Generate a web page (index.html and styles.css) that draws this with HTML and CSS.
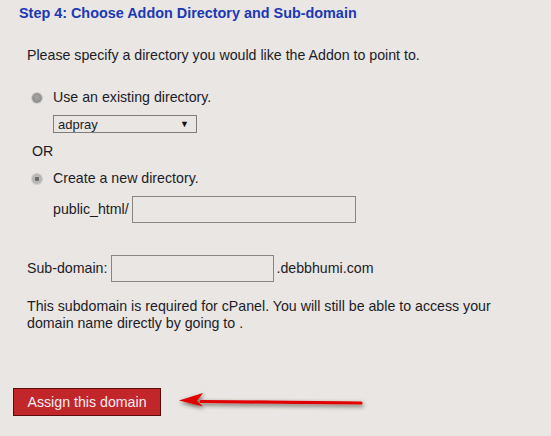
FILE: index.html
```html
<!DOCTYPE html>
<html>
<head>
<meta charset="utf-8">
<link rel="stylesheet" href="styles.css">
</head>
<body>
<div class="page">
  <h2 class="title">Step 4: Choose Addon Directory and Sub-domain</h2>
  <p class="intro">Please specify a directory you would like the Addon to point to.</p>
  <div class="radio-row first">
    <span class="radio"></span>
    <span>Use an existing directory.</span>
  </div>
  <div class="select">
    <span>adpray</span>
    <span class="caret">▼</span>
  </div>
  <div class="or">OR</div>
  <div class="radio-row second">
    <span class="radio checked"></span>
    <span>Create a new directory.</span>
  </div>
  <div class="field-row dir">
    <span>public_html/</span>
    <span class="input wide"></span>
  </div>
  <div class="field-row sub">
    <span>Sub-domain:</span>
    <span class="input narrow"></span>
    <span>.debbhumi.com</span>
  </div>
  <p class="help">This subdomain is required for cPanel. You will still be able to access your domain name directly by going to .</p>
  <div class="actions">
    <button class="assign">Assign this domain</button>
    <svg class="arrow" width="200" height="30" viewBox="0 0 200 30">
      <defs>
        <filter id="sh" x="-10%" y="-60%" width="120%" height="220%">
          <feDropShadow dx="1" dy="2" stdDeviation="2" flood-color="#3a3025" flood-opacity="0.75"/>
        </filter>
      </defs>
      <g filter="url(#sh)">
        <path d="M28 14.5 L188 16" stroke="#e00000" stroke-width="3.2" stroke-linecap="round" fill="none"/>
        <path d="M6 13.5 L30 6 L24 14 L30 19.5 Z" fill="#e00000"/>
      </g>
    </svg>
  </div>
</div>
</body>
</html>
```
FILE: styles.css
```css
html, body {
  margin: 0;
  padding: 0;
  background: #e9e6e3;
}
.page {
  width: 551px;
  height: 436px;
  font-family: "Liberation Sans", Arial, sans-serif;
  font-size: 14.2px;
  line-height: 15px;
  color: #1c1c28;
  display: flex;
  flex-direction: column;
  align-items: flex-start;
}
.title {
  margin: 6px 0 0 19px;
  font-size: 14.4px;
  font-weight: bold;
  line-height: 15px;
  color: #1b38b5;
}
.intro {
  margin: 27px 0 0 27px;
}
.radio-row {
  display: flex;
  align-items: center;
  gap: 11px;
  margin-left: 32px;
}
.radio-row.first { margin-top: 27px; }
.radio-row.second { margin-top: 12px; }
.radio {
  width: 10px;
  height: 10px;
  border-radius: 50%;
  background: radial-gradient(circle at 50% 40%, #a8a6a4 0%, #8f8d8b 70%, #c4c2c0 100%);
  box-shadow: 0 0 0 1px #cfcdcb;
}
.radio.checked {
  background: radial-gradient(circle, #6d6b69 0 2px, #bdbbb9 2.5px, #a9a7a5 100%);
}
.select {
  margin: 10px 0 0 53px;
  box-sizing: border-box;
  width: 144px;
  height: 18px;
  border: 1px solid #807c79;
  display: flex;
  align-items: center;
  justify-content: space-between;
  padding: 0 7px 0 4px;
  font-size: 13px;
}
.caret {
  font-size: 9px;
  color: #111;
}
.or {
  margin: 11px 0 0 32px;
}
.field-row {
  display: flex;
  align-items: center;
}
.field-row.dir {
  margin: 10px 0 0 53px;
  gap: 3px;
}
.field-row.sub {
  margin: 32px 0 0 27px;
  gap: 4px;
}
.input {
  box-sizing: border-box;
  height: 27px;
  border: 1px solid #8a8582;
}
.input.wide { width: 224px; }
.input.narrow { width: 163px; margin-right: -2px; }
.help {
  margin: 16px 0 0 27px;
  width: 500px;
  line-height: 17px;
}
.actions {
  margin: 54px 0 0 13px;
  display: flex;
  align-items: center;
}
.assign {
  box-sizing: border-box;
  width: 148px;
  height: 28px;
  background: #c1262b;
  border: 1px solid #5c0c0e;
  color: #f4eef2;
  font-family: "Liberation Sans", Arial, sans-serif;
  font-size: 14.2px;
  padding: 0;
  margin: 0;
}
.arrow {
  margin-left: 12px;
  margin-top: 1px;
}
```
